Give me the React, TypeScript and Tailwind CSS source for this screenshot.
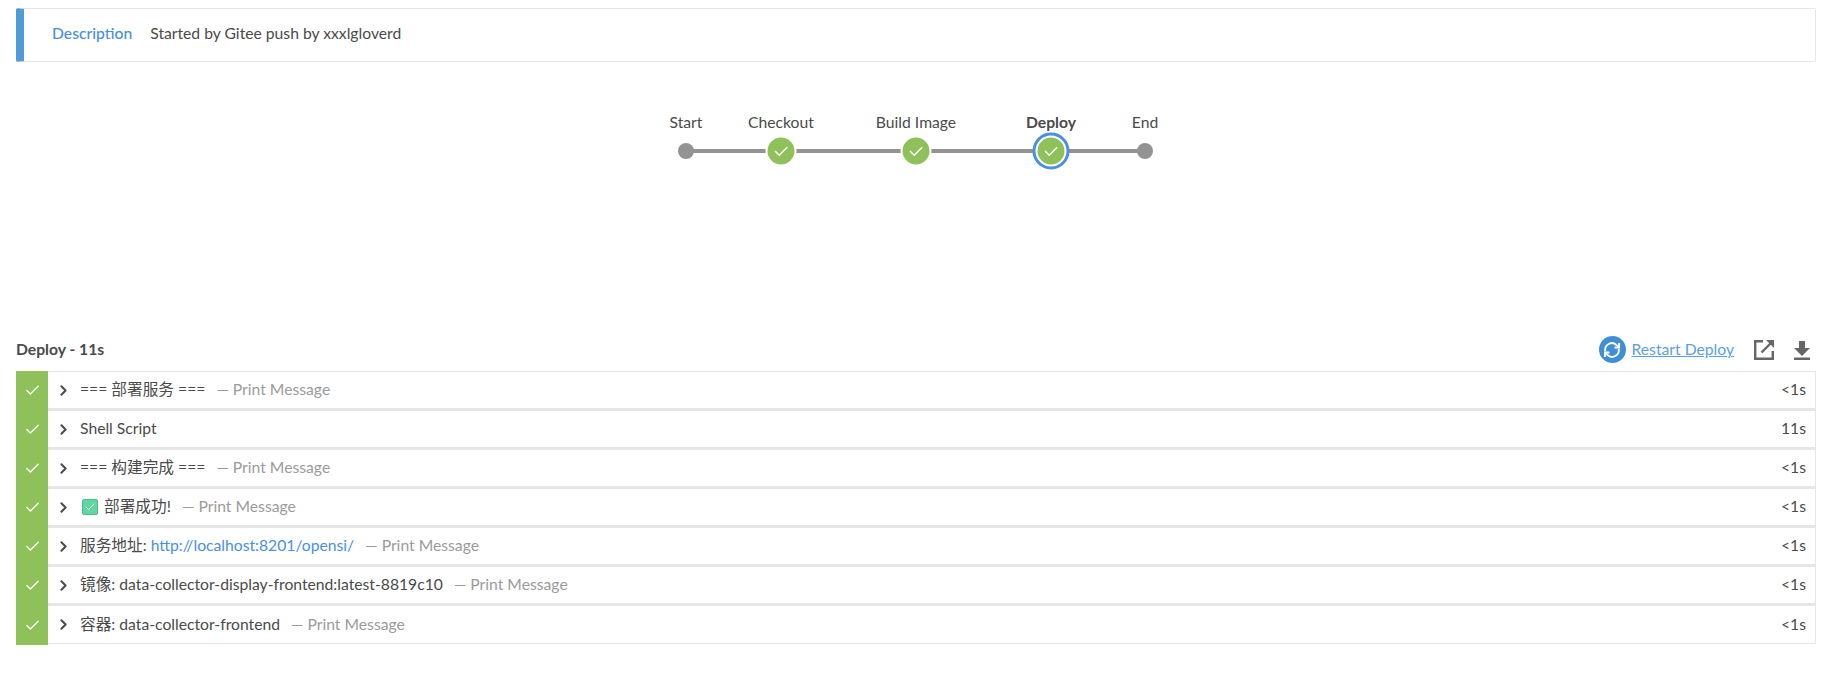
import { ChevronRight, Check } from 'lucide-react'
import type { ReactNode } from 'react'

interface Step {
  label: ReactNode
  time: string
  print?: boolean
}

const steps: Step[] = [
  { label: '=== 部署服务 ===', time: '<1s', print: true },
  { label: 'Shell Script', time: '11s' },
  { label: '=== 构建完成 ===', time: '<1s', print: true },
  {
    label: (
      <span className="inline-flex items-center">
        <span className="mr-[6px] ml-[2px] flex h-[16px] w-[16px] items-center justify-center rounded-[2px] border border-[#4dba89] bg-[#62d6a0]">
          <Check size={12} strokeWidth={2} className="text-white" />
        </span>
        部署成功!
      </span>
    ),
    time: '<1s',
    print: true,
  },
  {
    label: (
      <>
        服务地址: <span className="text-[#4a90e2]">http://localhost:8201/opensi/</span>
      </>
    ),
    time: '<1s',
    print: true,
  },
  { label: '镜像: data-collector-display-frontend:latest-8819c10', time: '<1s', print: true },
  { label: '容器: data-collector-frontend', time: '<1s', print: true },
]

function StageGraph() {
  const stages = [
    { name: 'Start', x: 27, kind: 'dot' },
    { name: 'Checkout', x: 122, kind: 'ok' },
    { name: 'Build Image', x: 257, kind: 'ok' },
    { name: 'Deploy', x: 392, kind: 'selected' },
    { name: 'End', x: 486, kind: 'dot' },
  ]
  const cy = 50
  return (
    <svg width="520" height="90" viewBox="0 0 520 90" className="block">
      <line x1="27" y1={cy} x2="486" y2={cy} stroke="#949393" strokeWidth="4" />
      {stages.map((s) => (
        <g key={s.name}>
          <text
            x={s.x}
            y="27"
            textAnchor="middle"
            fill="#4a4a4a"
            className={s.kind === 'selected' ? 'text-[15.7px] font-bold' : 'text-[15.7px]'}
          >
            {s.name}
          </text>
          {s.kind === 'dot' && <circle cx={s.x} cy={cy} r="8" fill="#949393" />}
          {s.kind !== 'dot' && <circle cx={s.x} cy={cy} r="15.5" fill="#fff" />}
          {s.kind === 'selected' && <circle cx={s.x} cy={cy} r="17" fill="#fff" stroke="#4a90e2" strokeWidth="3" />}
          {s.kind !== 'dot' && (
            <>
              <circle cx={s.x} cy={cy} r="13.5" fill="#8fc15b" />
              <path d={`M${s.x - 6} ${cy} l4.2 4.2 l8 -8`} fill="none" stroke="#fff" strokeWidth="1.5" />
            </>
          )}
        </g>
      ))}
    </svg>
  )
}

export default function App() {
  return (
    <div className="min-h-[674px] bg-white px-4 pt-2 font-['Lato','Noto_Sans_CJK_SC',sans-serif] text-[15.7px] text-[#4a4a4a]">
      <div className="flex h-[54px] w-[1800px] items-center rounded-[2px] border border-l-8 border-[#e6e6e6] border-l-[#4e9bd6] pb-[2px] pl-7">
        <span className="font-medium text-[#4a90d6]">Description</span>
        <span className="ml-[18px]">Started by Gitee push by xxxlgloverd</span>
      </div>

      <div className="mt-[39px] flex h-[90px] w-[1800px] justify-center pl-[5px]">
        <StageGraph />
      </div>

      <div className="mt-[139px] w-[1800px]">
        <div className="flex h-[41px] items-center justify-between pr-[2px] pb-[2px]">
          <h2 className="text-[15.7px] font-bold text-[#4a4a4a]">Deploy - 11s</h2>
          <div className="flex items-center">
            <span className="flex h-[27px] w-[27px] items-center justify-center rounded-full bg-[#3f8fd6]">
              <svg width="20" height="20" viewBox="0 0 24 24" fill="none" stroke="#fff" strokeWidth="2.3">
                <path d="M4 13.5A8 8 0 0 1 17.5 6.2L20 8.5" />
                <path d="M20.5 3.5v5.5H15" />
                <path d="M20 10.5A8 8 0 0 1 6.5 17.8L4 15.5" />
                <path d="M3.5 20.5V15H9" />
              </svg>
            </span>
            <span className="ml-[6px] text-[#5a9fe6] underline">Restart Deploy</span>
            <svg width="24" height="24" viewBox="0 0 24 24" className="ml-[18px]">
              <path d="M11 3.2H3.2v17.6h17.6V13" fill="none" stroke="#666" strokeWidth="2.4" />
              <path d="M9.5 14.5 20 4" fill="none" stroke="#666" strokeWidth="2.4" />
              <path d="M14 2h8v8z" fill="#666" />
            </svg>
            <svg width="24" height="24" viewBox="0 0 24 24" className="ml-[14px]">
              <path d="M9 3h6v7h5l-8 8-8-8h5z" fill="#666" />
              <path d="M4 19.5h16V22H4z" fill="#666" />
            </svg>
          </div>
        </div>

        <div className="w-[1800px]">
          {steps.map((step, i) => (
            <div key={i} className="flex h-[39px] border-b-2 border-[#e6e6e6] bg-white last:border-b">
              <div className="-mb-[2px] flex w-8 shrink-0 items-center justify-center bg-[#8fc15b]">
                <Check size={17} strokeWidth={1.8} className="text-white" />
              </div>
              <div className="flex flex-1 items-center border-t border-r border-[#e6e6e6] pr-[9px]">
                <ChevronRight size={17} strokeWidth={2.8} className="ml-[7px] text-[#4a4a4a]" />
                <span className="ml-[8px]">{step.label}</span>
                {step.print && <span className="ml-[11px] text-[#9b9b9b]">— Print Message</span>}
                <span className="ml-auto">{step.time}</span>
              </div>
            </div>
          ))}
        </div>
      </div>
    </div>
  )
}
